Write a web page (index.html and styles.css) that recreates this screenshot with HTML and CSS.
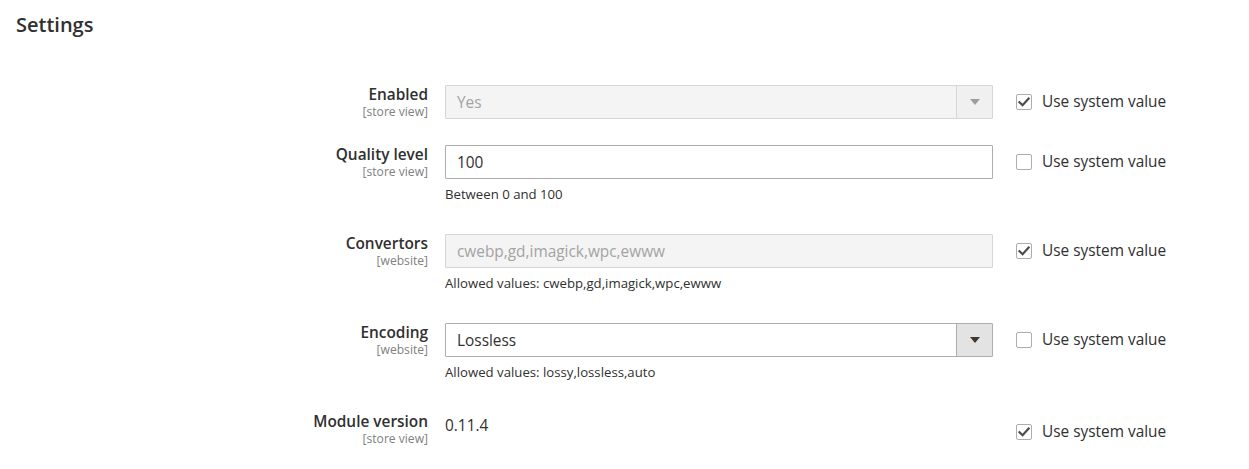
FILE: index.html
```html
<!DOCTYPE html>
<html lang="en">
<head>
<meta charset="utf-8">
<title>Settings</title>
<link rel="stylesheet" href="styles.css">
</head>
<body>
<div class="page">
  <h2 class="section-title">Settings</h2>
  <div class="fields">

    <div class="row">
      <div class="label"><span class="label-text">Enabled</span><span class="scope">[store view]</span></div>
      <div class="control">
        <div class="select is-disabled">
          <span class="select-value">Yes</span>
          <span class="select-arrow"><span class="triangle"></span></span>
        </div>
      </div>
      <label class="use-default">
        <span class="checkbox is-checked"><svg viewBox="0 0 16 16" width="16" height="16"><polyline points="3.5,8.2 6.6,11.2 12.6,4.6" /></svg></span>
        <span class="use-text">Use system value</span>
      </label>
    </div>

    <div class="row">
      <div class="label"><span class="label-text">Quality level</span><span class="scope">[store view]</span></div>
      <div class="control">
        <input class="text-input" type="text" value="100">
        <div class="note">Between 0 and 100</div>
      </div>
      <label class="use-default">
        <span class="checkbox"></span>
        <span class="use-text">Use system value</span>
      </label>
    </div>

    <div class="row">
      <div class="label"><span class="label-text">Convertors</span><span class="scope">[website]</span></div>
      <div class="control">
        <input class="text-input is-disabled" type="text" value="cwebp,gd,imagick,wpc,ewww" disabled>
        <div class="note">Allowed values: cwebp,gd,imagick,wpc,ewww</div>
      </div>
      <label class="use-default">
        <span class="checkbox is-checked"><svg viewBox="0 0 16 16" width="16" height="16"><polyline points="3.5,8.2 6.6,11.2 12.6,4.6" /></svg></span>
        <span class="use-text">Use system value</span>
      </label>
    </div>

    <div class="row">
      <div class="label"><span class="label-text">Encoding</span><span class="scope">[website]</span></div>
      <div class="control">
        <div class="select">
          <span class="select-value">Lossless</span>
          <span class="select-arrow"><span class="triangle"></span></span>
        </div>
        <div class="note">Allowed values: lossy,lossless,auto</div>
      </div>
      <label class="use-default">
        <span class="checkbox"></span>
        <span class="use-text">Use system value</span>
      </label>
    </div>

    <div class="row row-last">
      <div class="label"><span class="label-text">Module version</span><span class="scope">[store view]</span></div>
      <div class="control">
        <div class="control-value">0.11.4</div>
      </div>
      <label class="use-default use-default-low">
        <span class="checkbox is-checked"><svg viewBox="0 0 16 16" width="16" height="16"><polyline points="3.5,8.2 6.6,11.2 12.6,4.6" /></svg></span>
        <span class="use-text">Use system value</span>
      </label>
    </div>

  </div>
</div>
</body>
</html>
```

FILE: styles.css
```css
html, body {
  margin: 0;
  padding: 0;
  background: #ffffff;
}

body {
  font-family: "Open Sans", "Noto Sans", "Liberation Sans", sans-serif;
  color: #303030;
  font-size: 15.4px;
}

.page {
  padding: 11px 16px 0 16px;
}

.section-title {
  margin: 0;
  font-size: 20px;
  line-height: 27px;
  font-weight: 600;
  color: #303030;
}

.fields {
  margin-top: 47px;
  margin-left: -16px;
}

.row {
  display: flex;
  align-items: flex-start;
  margin-bottom: 26px;
}

.row-last {
  margin-top: 2px;
  margin-bottom: 0;
}

.label {
  width: 428px;
  flex: 0 0 428px;
  display: flex;
  flex-direction: column;
  align-items: flex-end;
  text-align: right;
}

.label-text {
  font-size: 15.4px;
  line-height: 20px;
  font-weight: 600;
  color: #303030;
}

.scope {
  font-size: 12.1px;
  line-height: 14px;
  color: #808080;
}

.control {
  width: 548px;
  flex: 0 0 548px;
  margin-left: 17px;
}

.text-input {
  display: block;
  box-sizing: border-box;
  width: 100%;
  height: 34px;
  margin: 0;
  padding: 0 11px;
  border: 1px solid #adadad;
  border-radius: 1px;
  background: #ffffff;
  font-family: inherit;
  font-size: 15.4px;
  color: #303030;
  outline: none;
}

.text-input.is-disabled {
  background: #f4f4f4;
  border-color: #d6d6d6;
  color: #a3a3a3;
  -webkit-text-fill-color: #a3a3a3;
  opacity: 1;
}

.select {
  display: flex;
  box-sizing: border-box;
  height: 34px;
  border: 1px solid #adadad;
  border-radius: 1px;
  background: #ffffff;
}

.select-value {
  flex: 1;
  display: flex;
  align-items: center;
  padding-left: 11px;
  font-size: 15.4px;
  color: #303030;
}

.select-arrow {
  width: 35px;
  flex: 0 0 35px;
  display: flex;
  align-items: center;
  justify-content: center;
  border-left: 1px solid #adadad;
  background: #e3e3e3;
}

.triangle {
  width: 0;
  height: 0;
  border-left: 5px solid transparent;
  border-right: 5px solid transparent;
  border-top: 6px solid #41362f;
}

.select.is-disabled {
  background: #f4f4f4;
  border-color: #d6d6d6;
}

.select.is-disabled .select-value {
  color: #a3a3a3;
}

.select.is-disabled .select-arrow {
  background: #f0f0f0;
  border-left-color: #d6d6d6;
}

.select.is-disabled .triangle {
  border-top-color: #a39d99;
}

.note {
  margin-top: 7px;
  margin-bottom: 5px;
  font-size: 13.2px;
  line-height: 17px;
  color: #303030;
}

.control-value {
  padding-top: 4px;
  font-size: 15.4px;
  line-height: 19px;
  color: #303030;
}

.use-default {
  display: flex;
  align-items: center;
  height: 34px;
  margin-left: 23px;
  gap: 10px;
  cursor: pointer;
}

.use-default-low {
  margin-top: 3px;
}

.checkbox {
  box-sizing: border-box;
  width: 16px;
  height: 16px;
  border: 1px solid #adadad;
  border-radius: 2px;
  background: #ffffff;
  display: flex;
  align-items: center;
  justify-content: center;
}

.checkbox svg {
  display: block;
  margin: -1px;
  fill: none;
  stroke: #514943;
  stroke-width: 2.2;
  stroke-linecap: square;
}

.use-text {
  font-size: 15.4px;
  line-height: 20px;
  color: #303030;
}
```
